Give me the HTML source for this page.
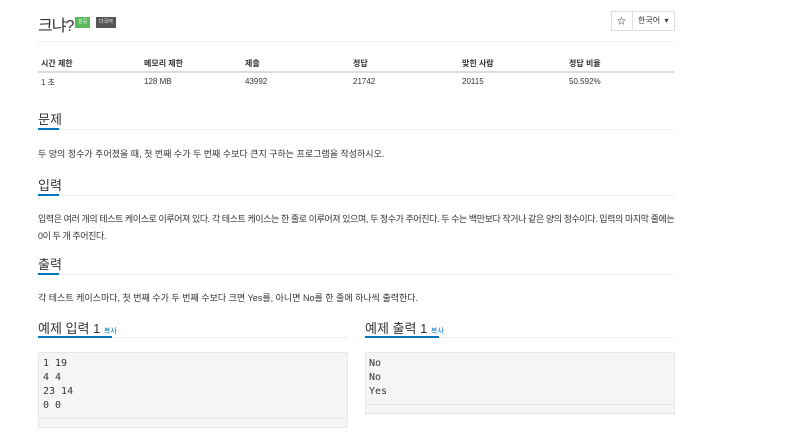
<!DOCTYPE html>
<html><head><meta charset="utf-8"><style>
body{margin:0;background:#fff;font-family:"Liberation Sans","Noto Sans CJK KR",sans-serif;color:#333;width:800px;height:441px;overflow:hidden;position:relative}
.a{position:absolute;white-space:nowrap}
.t{font-size:9px;color:#333}
.h{font-size:13px;color:#333}
.ul{height:2px;background:#0076c0}
.line{height:1px;background:#eee}
.lab{font-size:5px;color:#fff;padding:1px 3px;line-height:9px}
pre{margin:0;font-family:"DejaVu Sans Mono","Liberation Mono",monospace;font-size:10px;line-height:14px;color:#333}
</style></head><body>
<div class="a" style="left:38px;top:12px;font-size:16px;color:#333;letter-spacing:-1px">크냐?</div>
<div class="a lab" style="left:75px;top:17px;background:#5cb85c">성공</div>
<div class="a lab" style="left:96px;top:17px;background:#555">다국어</div>
<div class="a" style="left:611px;top:11px;width:62px;height:18px;border:1px solid #ddd;font-size:8px"></div>
<div class="a" style="left:632px;top:11px;width:1px;height:19px;background:#ddd"></div>
<div class="a t" style="left:617px;top:14px;font-size:9px">☆</div>
<div class="a" style="left:638px;top:15px;font-size:8px;color:#333">한국어 &nbsp;▾</div>
<div class="a line" style="left:38px;top:41px;width:636px"></div>
<div class="a t" style="left:41px;top:58px;font-weight:bold;font-size:8px">시간 제한</div>
<div class="a t" style="left:144px;top:58px;font-weight:bold;font-size:8px">메모리 제한</div>
<div class="a t" style="left:245px;top:58px;font-weight:bold;font-size:8px">제출</div>
<div class="a t" style="left:353px;top:58px;font-weight:bold;font-size:8px">정답</div>
<div class="a t" style="left:462px;top:58px;font-weight:bold;font-size:8px">맞힌 사람</div>
<div class="a t" style="left:569px;top:58px;font-weight:bold;font-size:8px">정답 비율</div>
<div class="a" style="left:38px;top:71px;width:636px;height:2px;background:#ddd"></div>
<div class="a t" style="left:41px;top:77px;font-size:8px">1 초</div>
<div class="a t" style="left:144px;top:77px;font-size:8px">128 MB</div>
<div class="a t" style="left:245px;top:77px;font-size:8px">43992</div>
<div class="a t" style="left:353px;top:77px;font-size:8px">21742</div>
<div class="a t" style="left:462px;top:77px;font-size:8px">20115</div>
<div class="a t" style="left:569px;top:77px;font-size:8px">50.592%</div>
<div class="a h" style="left:38px;top:109px">문제</div>
<div class="a line" style="left:38px;top:129px;width:636px"></div>
<div class="a ul" style="left:38px;top:128px;width:21px"></div>
<div class="a t" style="left:38px;top:147px">두 양의 정수가 주어졌을 때, 첫 번째 수가 두 번째 수보다 큰지 구하는 프로그램을 작성하시오.</div>
<div class="a h" style="left:38px;top:175px">입력</div>
<div class="a line" style="left:38px;top:195px;width:636px"></div>
<div class="a ul" style="left:38px;top:194px;width:21px"></div>
<div class="a t" style="left:38px;top:211px;line-height:17px;letter-spacing:-0.42px">입력은 여러 개의 테스트 케이스로 이루어져 있다. 각 테스트 케이스는 한 줄로 이루어져 있으며, 두 정수가 주어진다. 두 수는 백만보다 작거나 같은 양의 정수이다. 입력의 마지막 줄에는<br>0이 두 개 주어진다.</div>
<div class="a h" style="left:38px;top:254px">출력</div>
<div class="a line" style="left:38px;top:274px;width:636px"></div>
<div class="a ul" style="left:38px;top:273px;width:21px"></div>
<div class="a t" style="left:38px;top:291px">각 테스트 케이스마다, 첫 번째 수가 두 번째 수보다 크면 Yes를, 아니면 No를 한 줄에 하나씩 출력한다.</div>
<div class="a h" style="left:38px;top:318px">예제 입력 1 <span style="font-size:7px;color:#0076c0">복사</span></div>
<div class="a line" style="left:38px;top:337px;width:310px"></div>
<div class="a ul" style="left:38px;top:336px;width:74px"></div>
<div class="a h" style="left:365px;top:318px">예제 출력 1 <span style="font-size:7px;color:#0076c0">복사</span></div>
<div class="a line" style="left:365px;top:337px;width:309px"></div>
<div class="a ul" style="left:365px;top:336px;width:74px"></div>
<div class="a" style="left:38px;top:352px;width:308px;height:74px;background:#f5f5f7;border:1px solid #e5e5e5"><pre style="padding:4px 4px">1 19
4 4
23 14
0 0</pre></div>
<div class="a" style="left:38px;top:418px;width:310px;height:1px;background:#e5e5e5"></div>
<div class="a" style="left:365px;top:352px;width:308px;height:60px;background:#f5f5f7;border:1px solid #e5e5e5"><pre style="padding:4px 3px">No
No
Yes</pre></div>
<div class="a" style="left:365px;top:404px;width:310px;height:1px;background:#e5e5e5"></div>
</body></html>
